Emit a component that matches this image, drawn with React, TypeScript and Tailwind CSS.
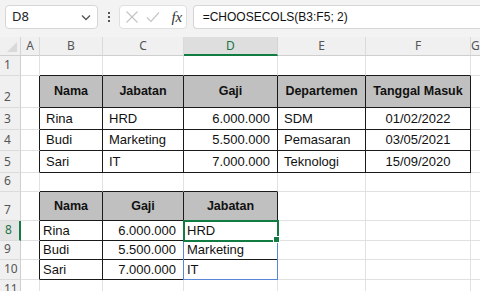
import React from "react";

type Cell = { t: string; a: "l" | "r" | "c"; h?: boolean; tb: 1 | 2 };

const data: Record<string, Cell> = {};
const put = (r: number, c: number, t: string, a: "l" | "r" | "c", tb: 1 | 2, h = false) => {
  data[`${r},${c}`] = { t, a, h, tb };
};
// Table 1 (B2:F5)
["Nama", "Jabatan", "Gaji", "Departemen", "Tanggal Masuk"].forEach((t, i) => put(2, i + 1, t, "c", 1, true));
const t1 = [
  ["Rina", "HRD", "6.000.000", "SDM", "01/02/2022"],
  ["Budi", "Marketing", "5.500.000", "Pemasaran", "03/05/2021"],
  ["Sari", "IT", "7.000.000", "Teknologi", "15/09/2020"],
];
t1.forEach((row, ri) => {
  const al: ("l" | "r" | "c")[] = ["l", "l", "r", "l", "c"];
  row.forEach((t, ci) => put(ri + 3, ci + 1, t, al[ci], 1));
});
// Table 2 (B7:D10)
["Nama", "Gaji", "Jabatan"].forEach((t, i) => put(7, i + 1, t, "c", 2, true));
const t2 = [
  ["Rina", "6.000.000", "HRD"],
  ["Budi", "5.500.000", "Marketing"],
  ["Sari", "7.000.000", "IT"],
];
t2.forEach((row, ri) => {
  const al: ("l" | "r" | "c")[] = ["l", "r", "l"];
  row.forEach((t, ci) => put(ri + 8, ci + 1, t, al[ci], 2));
});

const inTable = (r: number, c: number) =>
  (r >= 2 && r <= 5 && c >= 1 && c <= 5) || (r >= 7 && r <= 10 && c >= 1 && c <= 3);

const COLS = ["A", "B", "C", "D", "E", "F", "G"];
const ROWS = [1, 2, 3, 4, 5, 6, 7, 8, 9, 10, 11];

function XIcon() {
  return (
    <svg width="14" height="14" viewBox="0 0 14 14" fill="none" stroke="#c4c4c4" strokeWidth="1.2">
      <path d="M1.5 1.5 L12.5 12.5 M12.5 1.5 L1.5 12.5" />
    </svg>
  );
}
function CheckIcon() {
  return (
    <svg width="14" height="14" viewBox="0 0 14 14" fill="none" stroke="#c4c4c4" strokeWidth="1.2">
      <path d="M1 7.5 L5 11.5 L13 2.5" />
    </svg>
  );
}

function GridCell({ r, c }: { r: number; c: number }) {
  const d = data[`${r},${c}`];
  const rb = inTable(r, c) || inTable(r, c + 1);
  const bb = inTable(r, c) || inTable(r + 1, c);
  const cls = [
    "relative flex items-center overflow-visible whitespace-nowrap border-r border-b",
    rb ? "border-r-[#1a1a1a]" : "border-r-[#e1e1e1]",
    bb ? "border-b-[#1a1a1a]" : "border-b-[#e1e1e1]",
    d?.h ? "bg-[#c0c0c0] font-bold text-[12.5px] justify-center" : "text-[13px]",
    d && !d.h && d.a === "l" ? (d.tb === 1 ? "justify-start pl-[6px]" : "justify-start pl-[3px]") : "",
    d && !d.h && d.a === "r" ? "justify-end pr-[7px]" : "",
    d && !d.h && d.a === "c" ? "justify-center" : "",
  ].join(" ");
  const active = r === 8 && c === 3;
  return (
    <div className={cls}>
      {d ? <span className="text-[#111]">{d.t}</span> : null}
      {active ? (
        <>
          <div className="pointer-events-none absolute left-[-1px] top-[-1px] z-10 h-[60px] w-[95px] border border-[#5a86d6]" />
          <div className="pointer-events-none absolute left-[-1px] top-[-1px] z-20 h-[22px] w-[96px] border-2 border-[#107c41]" />
          <div className="pointer-events-none absolute left-[89px] top-[15px] z-30 h-[7px] w-[7px] border border-white bg-[#107c41]" />
        </>
      ) : null}
    </div>
  );
}

export default function App() {
  return (
    <div
      className="h-[291px] w-[480px] overflow-hidden bg-white text-black"
      style={{ fontFamily: '"Liberation Sans", Arial, sans-serif' }}
    >
      {/* Toolbar */}
      <div className="flex h-[37px] items-start bg-[#f3f3f3] pt-[5px]">
        <div className="ml-[5px] flex h-[24px] w-[97px] items-center justify-between rounded-[4px] border border-[#d6d6d6] bg-white pl-[6px] pr-[6px]">
          <span className="text-[13px] text-[#222]" style={{ fontFamily: '"Noto Sans", sans-serif' }}>D8</span>
          <svg width="10" height="7" viewBox="0 0 10 7" fill="none" stroke="#555" strokeWidth="1.3">
            <path d="M1 1.5 L5 5.5 L9 1.5" />
          </svg>
        </div>
        <div className="flex h-[24px] w-[22px] flex-col items-center justify-center gap-[2px]">
          <div className="h-[2px] w-[2px] bg-[#555]" />
          <div className="h-[2px] w-[2px] bg-[#555]" />
          <div className="h-[2px] w-[2px] bg-[#555]" />
        </div>
        <div className="flex h-[24px] w-[70px] items-center rounded-[4px] border border-[#e0e0e0] bg-white pl-[5px]">
          <XIcon />
          <div className="ml-[7px]">
            <CheckIcon />
          </div>
          <span
            className="ml-[11px] text-[15px] italic leading-none text-[#333]"
            style={{ fontFamily: '"Liberation Serif", "Times New Roman", serif' }}
          >
            fx
          </span>
        </div>
        <div className="ml-[6px] flex h-[24px] w-[300px] items-center rounded-l-[4px] border border-r-0 border-[#d6d6d6] bg-white pl-[9px]">
          <span className="text-[12px] text-[#111]">=CHOOSECOLS(B3:F5; 2)</span>
        </div>
      </div>

      {/* Sheet grid */}
      <div className="grid h-[254px] grid-cols-[21px_19px_63px_81px_94px_88px_105px_1fr] grid-rows-[19px_20px_32px_22px_21px_22px_19px_29px_20px_19px_20px_1fr]">
        {/* corner */}
        <div className="relative border-r border-b border-r-[#d4d4d4] border-b-[#cfcfcf] bg-[#f0f0f0]">
          <svg className="absolute left-0 top-0" width="20" height="18" viewBox="0 0 20 18">
            <polygon points="17,5 17,15 7,15" fill="#d9d9d9" />
          </svg>
        </div>
        {COLS.map((c) =>
          c === "D" ? (
            <div
              key={c}
              className="flex items-center justify-center border-r border-b-2 border-r-[#d4d4d4] border-b-[#107c41] bg-[#dedede] text-[12px] text-[#217346]"
              style={{ fontFamily: '"Noto Sans", sans-serif' }}
            >
              {c}
            </div>
          ) : (
            <div
              key={c}
              className="flex items-center justify-center border-r border-b border-r-[#dadada] border-b-[#cfcfcf] bg-[#f0f0f0] text-[12px] text-[#555]"
              style={{ fontFamily: '"Noto Sans", sans-serif' }}
            >
              {c}
            </div>
          )
        )}
        {ROWS.map((r) => (
          <React.Fragment key={r}>
            {r === 8 ? (
              <div
                className="flex items-end border-r-2 border-b border-r-[#107c41] border-b-[#dcdcdc] bg-[#e4e4e4] pb-[1px] pl-[5px] text-[12px] text-[#217346]"
                style={{ fontFamily: '"Noto Sans", sans-serif' }}
              >
                {r}
              </div>
            ) : (
              <div
                className="flex items-end border-r border-b border-r-[#cfcfcf] border-b-[#dcdcdc] bg-[#f0f0f0] pb-[1px] pl-[4px] text-[12px] text-[#555]"
                style={{ fontFamily: '"Noto Sans", sans-serif' }}
              >
                {r}
              </div>
            )}
            {COLS.map((_, ci) => (
              <GridCell key={ci} r={r} c={ci} />
            ))}
          </React.Fragment>
        ))}
      </div>
    </div>
  );
}
